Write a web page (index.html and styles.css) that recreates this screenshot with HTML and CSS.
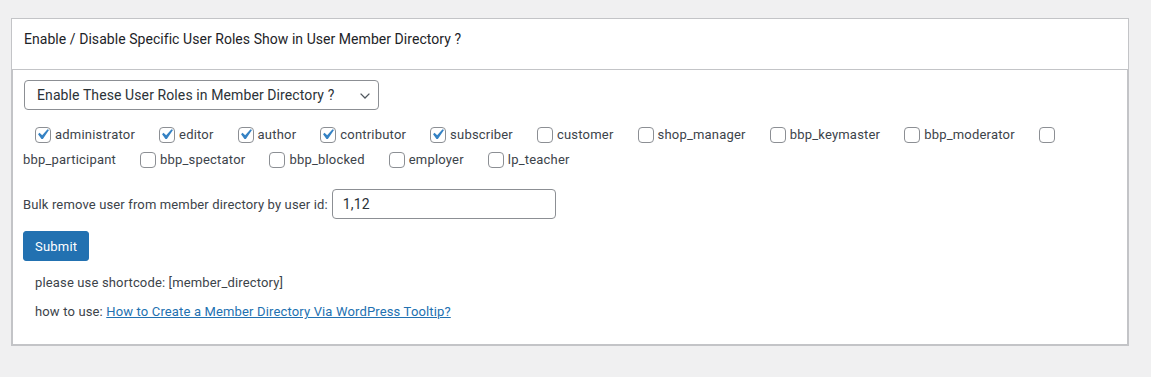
FILE: index.html
```html
<!DOCTYPE html>
<html lang="en">
<head>
<meta charset="utf-8">
<title>Member Directory Roles</title>
<link rel="stylesheet" href="styles.css">
</head>
<body>
<div class="wrap">
  <div class="card">
    <div class="card-head">
      <h2 class="card-title">Enable / Disable Specific User Roles Show in User Member Directory ?</h2>
    </div>
    <div class="card-body">
      <div class="select">
        <span class="select-text">Enable These User Roles in Member Directory ?</span>
        <svg class="chev" width="10" height="6" viewBox="0 0 10 6"><polyline points="0.6,0.6 5,5 9.4,0.6" fill="none" stroke="#50575e" stroke-width="1.3"/></svg>
      </div>

      <div class="roles">
        <div class="roles-row roles-row-first">
          <label class="role"><span class="cb"><svg viewBox="0 0 20 20" width="21" height="21"><path d="M14.83 4.89l1.34.94-5.81 8.38H9.02L5.78 9.670l1.34-1.25 2.57 2.4z" fill="#3582c4"/></svg></span>administrator</label>
          <label class="role"><span class="cb"><svg viewBox="0 0 20 20" width="21" height="21"><path d="M14.83 4.89l1.34.94-5.81 8.38H9.02L5.78 9.67l1.34-1.25 2.57 2.4z" fill="#3582c4"/></svg></span>editor</label>
          <label class="role"><span class="cb"><svg viewBox="0 0 20 20" width="21" height="21"><path d="M14.83 4.89l1.34.94-5.81 8.38H9.02L5.78 9.67l1.34-1.25 2.57 2.4z" fill="#3582c4"/></svg></span>author</label>
          <label class="role"><span class="cb"><svg viewBox="0 0 20 20" width="21" height="21"><path d="M14.83 4.89l1.34.94-5.81 8.38H9.02L5.78 9.67l1.34-1.25 2.57 2.4z" fill="#3582c4"/></svg></span>contributor</label>
          <label class="role"><span class="cb"><svg viewBox="0 0 20 20" width="21" height="21"><path d="M14.83 4.89l1.34.94-5.81 8.38H9.02L5.78 9.67l1.34-1.25 2.57 2.4z" fill="#3582c4"/></svg></span>subscriber</label>
          <label class="role"><span class="cb"></span>customer</label>
          <label class="role"><span class="cb"></span>shop_manager</label>
          <label class="role"><span class="cb"></span>bbp_keymaster</label>
          <label class="role"><span class="cb"></span>bbp_moderator</label>
          <label class="role"><span class="cb"></span></label>
        </div>
        <div class="roles-row">
          <span class="role">bbp_participant</span>
          <label class="role"><span class="cb"></span>bbp_spectator</label>
          <label class="role"><span class="cb"></span>bbp_blocked</label>
          <label class="role"><span class="cb"></span>employer</label>
          <label class="role"><span class="cb"></span>lp_teacher</label>
        </div>
      </div>

      <div class="bulk">
        <label class="bulk-label" for="uid">Bulk remove user from member directory by user id:</label>
        <input class="text-input" id="uid" type="text" value="1,12">
      </div>

      <button class="btn" type="button">Submit</button>

      <p class="note">please use shortcode: [member_directory]</p>
      <p class="note note-2">how to use: <a class="link" href="#">How to Create a Member Directory Via WordPress Tooltip?</a></p>
    </div>
  </div>
</div>
</body>
</html>
```
FILE: styles.css
```css
html, body {
  margin: 0;
  padding: 0;
  background: #f0f0f1;
}
body {
  font-family: Roboto, "Liberation Sans", sans-serif;
  font-size: 13px;
  color: #3c434a;
}
.wrap {
  padding: 18px 22px 20px 11px;
}
.card {
  width: 1118px;
}
.card-head {
  background: #fff;
  border: 1px solid #c3c4c7;
  padding: 10px 12px 20px;
}
.card-title {
  margin: 0;
  font-size: 14px;
  font-weight: 400;
  line-height: 20px;
  color: #1d2327;
  letter-spacing: 0.05px;
}
.card-body {
  background: #fff;
  border: 2px solid #c3c4c7;
  border-top: 0;
  padding: 10px 10px 22px;
}
.select {
  display: flex;
  align-items: center;
  justify-content: space-between;
  box-sizing: border-box;
  width: 355px;
  height: 30px;
  margin-left: 1px;
  padding: 0 8px 0 12px;
  border: 1px solid #8c8f94;
  border-radius: 4px;
  font-size: 14px;
  letter-spacing: 0.1px;
  color: #2c3338;
}
.chev {
  display: block;
  margin-top: 1px;
}
.roles {
  margin-top: 12px;
}
.roles-row {
  display: flex;
  align-items: center;
  height: 25px;
  gap: 24px;
  white-space: nowrap;
  letter-spacing: 0.2px;
}
.roles-row-first {
  padding-left: 12px;
}
.role {
  display: flex;
  align-items: center;
  gap: 4px;
  color: #3c434a;
}
.cb {
  position: relative;
  box-sizing: border-box;
  width: 16px;
  height: 16px;
  border: 1px solid #8c8f94;
  border-radius: 4px;
  background: #fff;
  flex: none;
}
.cb svg {
  position: absolute;
  left: -4px;
  top: -4px;
}
.bulk {
  display: flex;
  align-items: center;
  gap: 4px;
  margin-top: 17px;
}
.bulk-label {
  letter-spacing: 0.14px;
}
.text-input {
  box-sizing: border-box;
  width: 224px;
  height: 30px;
  margin: 0;
  padding: 0 10px;
  border: 1px solid #8c8f94;
  border-radius: 4px;
  font-family: inherit;
  font-size: 14px;
  letter-spacing: 0.2px;
  color: #2c3338;
  background: #fff;
  outline: none;
}
.btn {
  display: block;
  margin-top: 12px;
  height: 30px;
  padding: 0 11px;
  border: 1px solid #2271b1;
  border-radius: 3px;
  background: #2271b1;
  color: #fff;
  font-family: inherit;
  font-size: 13px;
  letter-spacing: 0.2px;
}
.note {
  margin: 12px 0 0;
  padding-left: 12px;
  line-height: 20px;
  letter-spacing: 0.15px;
}
.note-2 {
  margin-top: 9px;
}
.link {
  color: #2271b1;
  text-decoration: underline;
}
```
